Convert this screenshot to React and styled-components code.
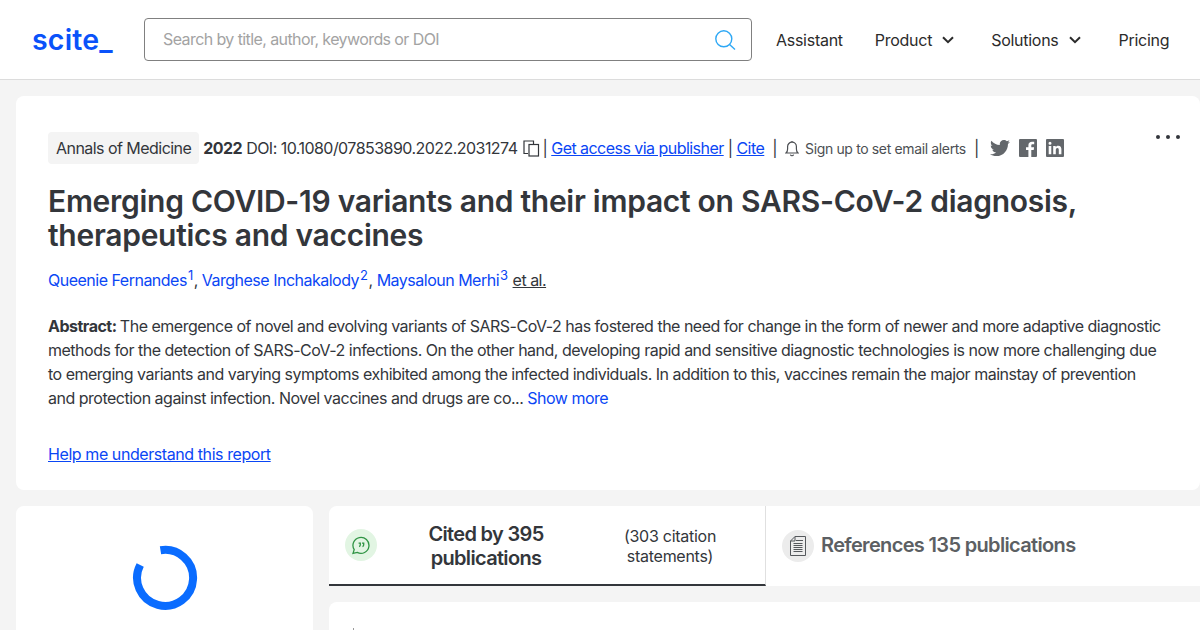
import React from 'react'
import styled, { createGlobalStyle } from 'styled-components'
import { FaTwitter } from 'react-icons/fa'

const GlobalStyle = createGlobalStyle`
  html, body {
    margin: 0;
    padding: 0;
    height: 630px;
    overflow: hidden;
    background: #f4f4f4;
    font-family: Inter, "Liberation Sans", sans-serif;
    color: #33363b;
  }
  * { box-sizing: border-box; }
`

const Header = styled.header`
  height: 80px;
  background: #fff;
  border-bottom: 1px solid #dcdcdc;
  display: flex;
  align-items: center;
  padding: 0 32px;
`
const Logo = styled.div`
  width: 112px;
  flex: none;
  font-size: 28.5px;
  font-weight: 600;
  color: #0a52fa;
  letter-spacing: 0.2px;
  margin-top: -1px;
`
const SearchBox = styled.div`
  width: 608px;
  flex: none;
  height: 43px;
  border: 1px solid #808080;
  border-radius: 4px;
  display: flex;
  align-items: center;
  justify-content: space-between;
  padding: 0 15px 0 18px;
  font-size: 16px;
  letter-spacing: -0.59px;
  color: #a3a3a3;
`
const SearchText = styled.span`
  margin-top: -2px;
`
const Nav = styled.nav`
  flex: 1;
  display: flex;
  align-items: center;
  margin-left: 24px;
  font-size: 16px;
  letter-spacing: -0.27px;
  color: #2b2b2b;
`
const NavItem = styled.div`
  display: flex;
  align-items: center;
  gap: 7px;
  margin-left: ${p => p.$gap || 0}px;
`
const Main = styled.main`
  padding: 16px 0 0 16px;
`
const Card = styled.section`
  position: relative;
  height: 394px;
  background: #fff;
  border-radius: 8px;
  padding: 36px 32px 0;
`
const MetaRow = styled.div`
  display: flex;
  align-items: center;
  height: 32px;
  font-size: 16px;
  letter-spacing: -0.54px;
  white-space: nowrap;
`
const Journal = styled.span`
  background: #f4f4f4;
  border-radius: 4px;
  padding: 0 8px;
  line-height: 32px;
  margin-right: 4px;
`
const Strong = styled.b`
  font-weight: 700;
  margin-right: 4px;
`
const Link = styled.a`
  color: #0a46f5;
  text-decoration: ${p => (p.$plain ? 'none' : 'underline')};
`
const Sep = styled.span`
  margin: ${p => p.$m || '0 4px'};
`
const Alerts = styled.span`
  font-size: 14px;
  letter-spacing: -0.36px;
  color: #4c4f53;
  margin-left: 6px;
`
const Social = styled.span`
  display: flex;
  align-items: center;
  gap: 9px;
  color: #63676b;
  font-size: 20px;
`
const More = styled.div`
  position: absolute;
  top: 39px;
  right: 20px;
  display: flex;
  gap: 6px;
  span {
    width: 4px;
    height: 4px;
    border-radius: 50%;
    background: #33363b;
  }
`
const Title = styled.h1`
  margin: 20px 0 0;
  font-size: 30px;
  line-height: 34px;
  font-weight: 600;
  letter-spacing: -0.28px;
  color: #33363b;
`
const Authors = styled.div`
  margin-top: 16px;
  font-size: 16px;
  line-height: 24px;
  letter-spacing: -0.5px;
  u { color: #33363b; margin-left: 4px; }
  sup { font-size: 13px; line-height: 0; margin: 0 1px 0 1px; }
`
const Abstract = styled.p`
  margin: 22px 0 0;
  font-size: 16px;
  line-height: 24px;
  letter-spacing: -0.5px;
  width: 1118px;
`
const Help = styled.div`
  margin-top: 32px;
  font-size: 16px;
  line-height: 24px;
  letter-spacing: -0.42px;
`
const Lower = styled.div`
  display: flex;
  gap: 16px;
  margin-top: 16px;
`
const Side = styled.aside`
  width: 297px;
  height: 140px;
  background: #fff;
  border-radius: 8px;
  display: flex;
  justify-content: center;
  padding-top: 39px;
`
const Results = styled.div`
  flex: 1;
`
const Tabs = styled.div`
  display: flex;
  height: 80px;
  background: #fff;
  border-radius: 8px 0 0 0;
`
const Tab = styled.div`
  display: flex;
  align-items: center;
  border-bottom: ${p => (p.$active ? '2px solid #33363b' : 'none')};
  border-right: ${p => (p.$active ? '1px solid #e0e0e0' : 'none')};
  width: ${p => (p.$active ? '437px' : 'auto')};
  padding-left: 16px;
  flex: ${p => (p.$active ? 'none' : '1')};
`
const Badge = styled.span`
  width: 32px;
  height: 32px;
  border-radius: 50%;
  background: ${p => p.$bg};
  display: flex;
  align-items: center;
  justify-content: center;
  flex: none;
`
const TabTitle = styled.div`
  width: 150px;
  margin: 2px 0 0 34px;
  text-align: center;
  font-size: 20px;
  line-height: 24px;
  font-weight: 600;
  letter-spacing: -0.67px;
  color: #33363b;
`
const TabName = styled.div`
  margin: -2px 0 0 7px;
  font-size: 20px;
  line-height: 24px;
  font-weight: 600;
  letter-spacing: -0.66px;
  color: #5c5f63;
  white-space: nowrap;
`
const TabSub = styled.div`
  width: 140px;
  margin: 2px 0 0 39px;
  text-align: center;
  font-size: 16px;
  line-height: 20px;
  letter-spacing: -0.27px;
`
const ListCard = styled.div`
  margin-top: 16px;
  height: 40px;
  background: #fff;
  border-radius: 8px 0 0 0;
  padding: 26px 0 0 24px;
`
const ListIconTip = styled.div`
  width: 1px;
  height: 2px;
  background: #9a9a9a;
`

function QuoteIcon() {
  return (
    <svg width="20" height="20" viewBox="0 0 20 20" fill="none" stroke="#2f9444" strokeWidth="1.3">
      <path d="M3.2 14.6A8 8 0 1 1 6.2 17.4L2 18.4Z" />
      <path d="M7.6 8.2h1.7v1.6c0 1-.4 1.6-1.2 1.9M11 8.2h1.7v1.6c0 1-.4 1.6-1.2 1.9" />
    </svg>
  )
}

function DocIcon() {
  return (
    <svg width="16" height="20" viewBox="0 0 16 20" fill="none" stroke="#55585c" strokeWidth="1">
      <path d="M5 .5h10.5v19H.5V5Z" />
      <path d="M5 .5V5H.5" />
      <path d="M6 4.5h7M3.5 7.5h9M3.5 9.5h9M3.5 11.5h9M3.5 13.5h9M3.5 15.5h9" strokeWidth="1.1" />
    </svg>
  )
}

function Chevron() {
  return (
    <svg width="12" height="8" viewBox="0 0 12 8" fill="none" stroke="#2b2b2b" strokeWidth="2" style={{ marginLeft: 3 }}>
      <path d="M1 1.2l5 5 5-5" />
    </svg>
  )
}

function FacebookIcon() {
  return (
    <svg width="18" height="18" viewBox="0 0 18 18">
      <path
        fillRule="evenodd"
        fill="#63676b"
        d="M1 0h16a1 1 0 0 1 1 1v16a1 1 0 0 1-1 1h-4.7v-6.900h2.400l.4-2.800h-2.800V6.600c0-.8.3-1.300 1.400-1.300h1.500V2.800c-.3 0-1.200-.1-2.200-.1-2.200 0-3.600 1.300-3.600 3.700v1.900H7v2.800h2.400V18H1a1 1 0 0 1-1-1V1a1 1 0 0 1 1-1Z"
      />
    </svg>
  )
}

function LinkedinIcon() {
  return (
    <svg width="18" height="18" viewBox="0 0 18 18">
      <path
        fillRule="evenodd"
        fill="#63676b"
        d="M1 0h16a1 1 0 0 1 1 1v16a1 1 0 0 1-1 1H1a1 1 0 0 1-1-1V1a1 1 0 0 1 1-1Zm1.700 6.900v8.400h2.600V6.900Zm1.300-4.100a1.500 1.500 0 1 0 0 3 1.500 1.500 0 0 0 0-3Zm3.200 4.100v8.400h2.600v-4.200c0-1.100.3-2.200 1.600-2.200s1.400 1.200 1.400 2.300v4.100h2.600v-4.600c0-2.300-.5-4-3.200-4-1.300 0-2.100.7-2.500 1.400V6.900Z"
      />
    </svg>
  )
}

export default function App() {
  return (
    <>
      <GlobalStyle />
      <Header>
        <Logo>scite_</Logo>
        <SearchBox>
          <SearchText>Search by title, author, keywords or DOI</SearchText>
          <svg width="22" height="22" viewBox="0 0 22 22" fill="none" stroke="#2ea8f5" strokeWidth="1.4">
            <circle cx="9.8" cy="9.8" r="8" />
            <path d="M15.6 15.6l5.4 5" />
          </svg>
        </SearchBox>
        <Nav>
          <NavItem>Assistant</NavItem>
          <NavItem $gap={32}>Product <Chevron /></NavItem>
          <NavItem $gap={37}>Solutions <Chevron /></NavItem>
          <NavItem $gap={38}>Pricing</NavItem>
        </Nav>
      </Header>
      <Main>
        <Card>
          <MetaRow>
            <Journal>Annals of Medicine</Journal>
            <Strong>2022</Strong>
            DOI: 10.1080/07853890.2022.2031274
            <svg width="17" height="17" viewBox="0 0 17 17" fill="none" stroke="#33363b" strokeWidth="1.2" style={{ marginLeft: 6 }}>
              <path d="M5 13.5H1V1h9.5v3" />
              <rect x="6" y="4.5" width="9.5" height="11.5" />
            </svg>
            <Sep $m="0 4px 0 2px">|</Sep>
            <Link href="#">Get access via publisher</Link>
            <Sep>|</Sep>
            <Link href="#">Cite</Link>
            <Sep $m="0 8px">|</Sep>
            <svg width="14" height="17" viewBox="0 0 14 17" fill="none" stroke="#4c4f53" strokeWidth="1.2">
              <path d="M1 13c1.2-1 1.6-2 1.6-4V6.600a4.400 4.400 0 0 1 8.800 0V9c0 2 .4 3 1.600 4Z" />
              <path d="M5.400 14.600a1.700 1.700 0 0 0 3.200 0M7 1v1" />
            </svg>
            <Alerts>Sign up to set email alerts</Alerts>
            <Sep $m="0 11px 0 8px">|</Sep>
            <Social>
              <FaTwitter />
              <FacebookIcon />
              <LinkedinIcon />
            </Social>
          </MetaRow>
          <More><span /><span /><span /></More>
          <Title>Emerging COVID-19 variants and their impact on SARS-CoV-2 diagnosis, therapeutics and vaccines</Title>
          <Authors>
            <Link href="#" $plain>Queenie Fernandes</Link><Link href="#" $plain><sup>1</sup></Link>,{' '}
            <Link href="#" $plain>Varghese Inchakalody</Link><Link href="#" $plain><sup>2</sup></Link>,{' '}
            <Link href="#" $plain>Maysaloun Merhi</Link><Link href="#" $plain><sup>3</sup></Link>
            <u>et al.</u>
          </Authors>
          <Abstract>
            <b>Abstract: </b>
            The emergence of novel and evolving variants of SARS-CoV-2 has fostered the need for change in the form of newer and more adaptive diagnostic methods for the detection of SARS-CoV-2 infections. On the other hand, developing rapid and sensitive diagnostic technologies is now more challenging due to emerging variants and varying symptoms exhibited among the infected individuals. In addition to this, vaccines remain the major mainstay of prevention and protection against infection. Novel vaccines and drugs are co...{' '}
            <Link href="#" $plain>Show more</Link>
          </Abstract>
          <Help><Link href="#">Help me understand this report</Link></Help>
        </Card>
        <Lower>
          <Side>
            <svg width="66" height="66" viewBox="0 0 66 66" fill="none">
              <path d="M28.5 5.2A28 28 0 1 1 8.2 20" stroke="#0a6cff" strokeWidth="8" />
            </svg>
          </Side>
          <Results>
            <Tabs>
              <Tab $active>
                <Badge $bg="#e2f5e3"><QuoteIcon /></Badge>
                <TabTitle>Cited by 395 publications</TabTitle>
                <TabSub>(303 citation statements)</TabSub>
              </Tab>
              <Tab>
                <Badge $bg="#ececec"><DocIcon /></Badge>
                <TabName>References 135 publications</TabName>
              </Tab>
            </Tabs>
            <ListCard><ListIconTip /></ListCard>
          </Results>
        </Lower>
      </Main>
    </>
  )
}
